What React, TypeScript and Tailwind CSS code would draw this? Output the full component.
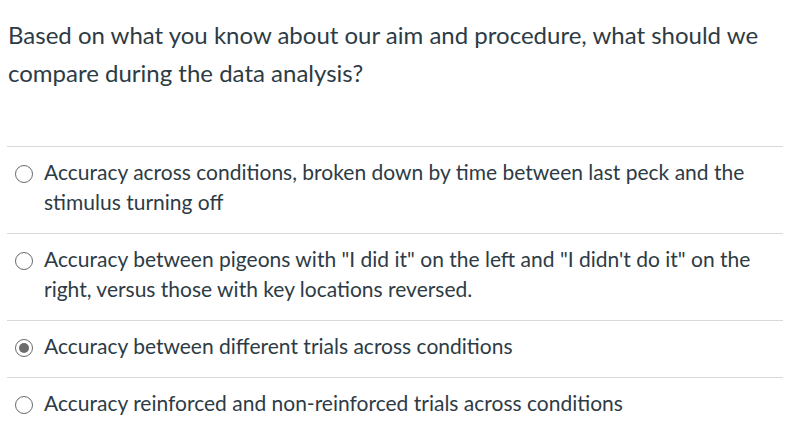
const options = [
  {
    text: 'Accuracy across conditions, broken down by time between last peck and the stimulus turning off',
    checked: false,
  },
  {
    text: 'Accuracy between pigeons with "I did it" on the left and "I didn\'t do it" on the right, versus those with key locations reversed.',
    checked: false,
  },
  { text: 'Accuracy between different trials across conditions', checked: true },
  { text: 'Accuracy reinforced and non-reinforced trials across conditions', checked: false },
];

function Radio({ checked }: { checked: boolean }) {
  return (
    <span className="mt-[8px] flex h-[18px] w-[18px] shrink-0 items-center justify-center rounded-full border-[1.5px] border-[#6b6b6b] bg-white">
      {checked && <span className="h-[10px] w-[10px] rounded-full bg-[#6b6b6b]" />}
    </span>
  );
}

export default function App() {
  return (
    <div className="min-h-[445px] w-[799px] bg-white font-['Lato',sans-serif] text-[#2d3b45]">
      <p className="w-[790px] pl-[8px] pt-[16px] text-[24px] leading-[38px]">
        Based on what you know about our aim and procedure, what should we compare during the data analysis?
      </p>
      <div className="ml-[7px] mt-[54px] w-[776px]">
        {options.map((o, i) => (
          <div
            key={i}
            className={`flex gap-[11px] pb-[16px] pt-[10px] pl-[8px] pr-[20px] ${i < options.length - 1 ? 'border-b border-[#d7dadd]' : ''} ${i === 0 ? 'border-t border-[#d7dadd]' : ''}`}
          >
            <Radio checked={o.checked} />
            <span className="text-[21px] leading-[30px]">{o.text}</span>
          </div>
        ))}
      </div>
    </div>
  );
}
